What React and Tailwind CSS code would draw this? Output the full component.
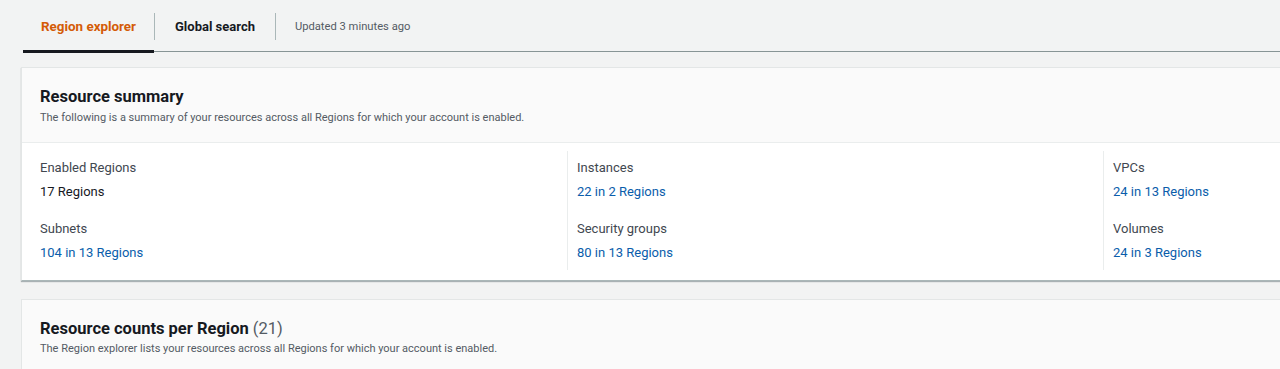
import React from "react";

const font = { fontFamily: "Roboto, 'Liberation Sans', sans-serif" };

function Item({ label, value, link }) {
  return (
    <div className="flex flex-col">
      <div className="text-[13px] leading-[16px] text-[#414750]">{label}</div>
      <div className={`mt-[8px] text-[13px] leading-[16px] ${link ? "text-[#0a5dab]" : "text-[#16191f]"}`}>{value}</div>
    </div>
  );
}

export default function App() {
  return (
    <div className="w-[1280px] h-[369px] overflow-hidden bg-[#f2f3f3]" style={font}>
      {/* Tabs */}
      <div className="pl-[23px] pt-[13px]">
        <div className="flex items-stretch border-b border-[#879596] h-[39px]">
          <div className="relative flex items-start w-[131px] pl-[18px]">
            <span className="pt-[4px] text-[13.4px] font-bold text-[#d45b07]">Region explorer</span>
            <div className="absolute left-0 right-0 bottom-[-2px] h-[3px] bg-[#16191f]" />
          </div>
          <div className="w-px h-[27px] bg-[#aab7b8]" />
          <div className="flex items-start pl-[20px] pr-[20px]">
            <span className="pt-[4px] text-[13px] font-bold text-[#16191f]">Global search</span>
          </div>
          <div className="w-px h-[27px] bg-[#aab7b8]" />
          <div className="flex items-start pl-[19px]">
            <span className="pt-[6px] text-[11.2px] text-[#545b64]">Updated 3 minutes ago</span>
          </div>
        </div>
      </div>

      {/* Resource summary card */}
      <div className="ml-[21px] mt-[15px] border-l border-t border-[#e3e6e6] shadow-[0_1px_1px_0_rgba(0,28,36,0.3)] border-b-[1px] border-b-[#aab7b8]">
        <div className="bg-[#fafafa] pl-[18px] pt-[19px] pb-[17px] border-b border-[#eaeded]">
          <div className="text-[16.5px] leading-[20px] font-bold text-[#16191f]">Resource summary</div>
          <div className="mt-[4px] text-[11px] leading-[14px] text-[#545b64]">
            The following is a summary of your resources across all Regions for which your account is enabled.
          </div>
        </div>
        <div className="bg-white flex pt-[8px] pb-[10px]">
          <div className="w-[545px] pl-[18px] pt-[9px] flex flex-col gap-[21px]">
            <Item label="Enabled Regions" value="17 Regions" />
            <Item label="Subnets" value="104 in 13 Regions" link />
          </div>
          <div className="w-[536px] border-l border-[#eaeded] pl-[9px] pt-[9px] flex flex-col gap-[21px]">
            <Item label="Instances" value="22 in 2 Regions" link />
            <Item label="Security groups" value="80 in 13 Regions" link />
          </div>
          <div className="flex-1 border-l border-[#eaeded] pl-[9px] pt-[9px] pb-[9px] flex flex-col gap-[21px]">
            <Item label="VPCs" value="24 in 13 Regions" link />
            <Item label="Volumes" value="24 in 3 Regions" link />
          </div>
        </div>
      </div>

      {/* Resource counts card */}
      <div className="ml-[21px] mt-[18px] border-l border-t border-[#e3e6e6]">
        <div className="bg-[#fafafa] pl-[18px] pt-[19px] pb-[18px]">
          <div className="text-[16.5px] leading-[20px] font-bold text-[#16191f]">
            Resource counts per Region <span className="font-normal text-[#545b64]">(21)</span>
          </div>
          <div className="mt-[3px] text-[11px] leading-[14px] text-[#545b64]">
            The Region explorer lists your resources across all Regions for which your account is enabled.
          </div>
        </div>
      </div>
    </div>
  );
}
